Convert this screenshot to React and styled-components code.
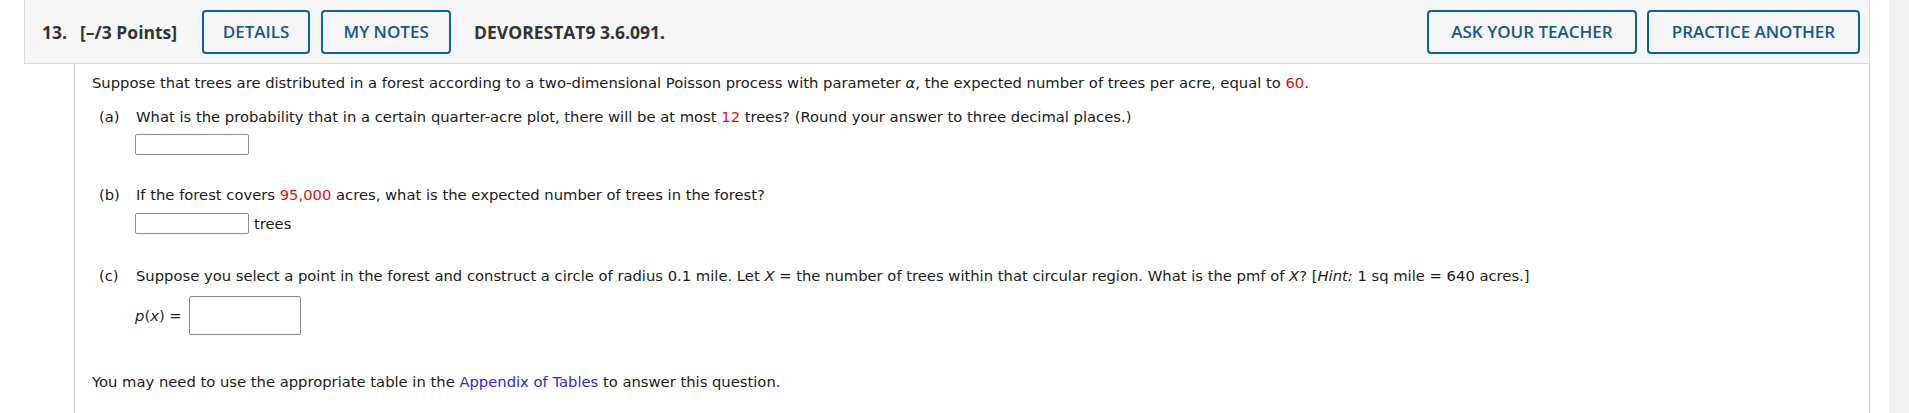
import React from "react";
import styled, { createGlobalStyle } from "styled-components";

const Global = createGlobalStyle`
  html, body { margin: 0; padding: 0; background: #fff; }
  body { font-family: "DejaVu Sans", Verdana, sans-serif; }
  #root { height: 413px; }
`;

const Page = styled.div`
  display: flex;
  height: 413px;
  overflow: hidden;
`;

const Main = styled.div`
  flex: 1;
  padding: 0 19px 0 24px;
  display: flex;
  flex-direction: column;
`;

const ScrollStrip = styled.div`
  width: 20px;
  background: #f0f0f0;
`;

const Header = styled.div`
  display: flex;
  align-items: center;
  height: 63px;
  background: #f6f6f6;
  border: 1px solid #dddddd;
  border-top: none;
  padding: 0 9px 0 17px;
  font-family: "Open Sans", sans-serif;
  color: #333;
`;

const Num = styled.span`
  font-weight: 700;
  font-size: 17.5px;
  margin-right: 13px;
`;

const Points = styled.span`
  font-weight: 700;
  font-size: 17.5px;
  margin-right: 25px;
`;

const Btn = styled.button`
  box-sizing: border-box;
  width: ${(p) => p.$w}px;
  height: 44px;
  padding: 0;
  margin-right: ${(p) => p.$mr || 0}px;
  background: #f6f6f6;
  border: 2px solid #0b63a0;
  border-radius: 4px;
  color: #17578a;
  font-family: "Open Sans", sans-serif;
  font-size: 17px;
  font-weight: 600;
  white-space: nowrap;
  cursor: pointer;
`;

const Code = styled.span`
  font-weight: 700;
  font-size: 17.5px;
`;

const Spacer = styled.div`
  flex: 1;
`;

const Panel = styled.div`
  flex: 1;
  margin-left: 50px;
  border-left: 1px solid #cccccc;
  border-right: 1px solid #cccccc;
  padding: 9px 17px 0 17px;
  color: #1a1a1a;
  font-size: 14.75px;
  line-height: 20px;
`;

const P = styled.p`
  margin: ${(p) => p.$mt || 0}px 0 0 0;
`;

const Red = styled.span`
  color: #e2110e;
`;

const Link = styled.a`
  color: #2b2bd0;
  text-decoration: none;
`;

const I = styled.i``;

const Part = styled.div`
  display: flex;
  margin-top: ${(p) => p.$mt}px;
  padding-left: 7px;
`;

const Label = styled.div`
  width: 37px;
  flex: none;
`;

const PartBody = styled.div`
  flex: 1;
`;

const AnswerRow = styled.div`
  display: flex;
  align-items: center;
  gap: 5px;
  margin-top: ${(p) => p.$mt}px;
  margin-left: -1px;
`;

const Input = styled.input`
  box-sizing: border-box;
  width: ${(p) => p.$w}px;
  height: ${(p) => p.$h}px;
  border: 1px solid #8a8a8a;
  border-radius: 2px;
  margin: 0;
  padding: 0 4px;
  background: #fff;
`;

const Math = styled.span`
  color: #1d1d3a;
  margin-right: 2px;
`;

export default function App() {
  return (
    <>
      <Global />
      <Page>
        <Main>
          <Header>
            <Num>13.</Num>
            <Points>[–/3 Points]</Points>
            <Btn $w={108} $mr={11}>DETAILS</Btn>
            <Btn $w={130} $mr={23}>MY NOTES</Btn>
            <Code>DEVORESTAT9 3.6.091.</Code>
            <Spacer />
            <Btn $w={210} $mr={10}>ASK YOUR TEACHER</Btn>
            <Btn $w={213}>PRACTICE ANOTHER</Btn>
          </Header>
          <Panel>
            <P>
              Suppose that trees are distributed in a forest according to a two-dimensional Poisson process
              with parameter <I>α</I>, the expected number of trees per acre, equal to <Red>60</Red>.
            </P>
            <Part $mt={14}>
              <Label>(a)</Label>
              <PartBody>
                <div>
                  What is the probability that in a certain quarter-acre plot, there will be at most{" "}
                  <Red>12</Red> trees? (Round your answer to three decimal places.)
                </div>
                <AnswerRow $mt={7}>
                  <Input $w={114} $h={21} />
                </AnswerRow>
              </PartBody>
            </Part>
            <Part $mt={30}>
              <Label>(b)</Label>
              <PartBody>
                <div>
                  If the forest covers <Red>95,000</Red> acres, what is the expected number of trees in the forest?
                </div>
                <AnswerRow $mt={8}>
                  <Input $w={114} $h={21} />
                  <span>trees</span>
                </AnswerRow>
              </PartBody>
            </Part>
            <Part $mt={32}>
              <Label>(c)</Label>
              <PartBody>
                <div>
                  Suppose you select a point in the forest and construct a circle of radius 0.1 mile. Let{" "}
                  <I>X</I> = the number of trees within that circular region. What is the pmf of <I>X</I>? [
                  <I>Hint:</I> 1 sq mile = 640 acres.]
                </div>
                <AnswerRow $mt={10}>
                  <Math>
                    <I>p</I>(<I>x</I>) =
                  </Math>
                  <Input $w={112} $h={39} />
                </AnswerRow>
              </PartBody>
            </Part>
            <P $mt={37}>
              You may need to use the appropriate table in the <Link href="#">Appendix of Tables</Link> to answer
              this question.
            </P>
          </Panel>
        </Main>
        <ScrollStrip />
      </Page>
    </>
  );
}
